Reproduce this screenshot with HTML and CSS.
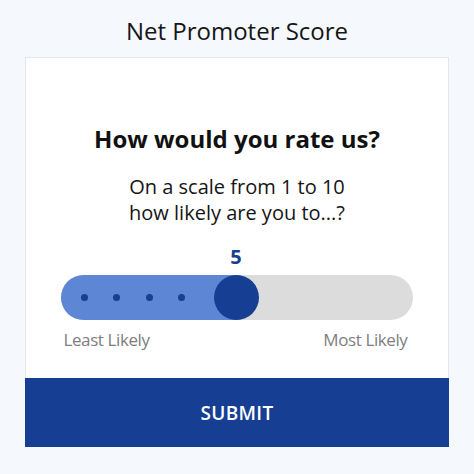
FILE: index.html
```html
<!DOCTYPE html>
<html>
<head>
<meta charset="utf-8">
<link rel="stylesheet" href="styles.css">
</head>
<body>
<div class="page">
  <h1 class="title">Net Promoter Score</h1>
  <div class="card">
    <div class="content">
      <h2 class="question">How would you rate us?</h2>
      <p class="sub">On a scale from 1 to 10<br>how likely are you to...?</p>
      <div class="value">5</div>
      <div class="track">
        <div class="fill">
          <span class="dot"></span>
          <span class="dot"></span>
          <span class="dot"></span>
          <span class="dot"></span>
          <span class="thumb"></span>
        </div>
      </div>
      <div class="labels">
        <span>Least Likely</span>
        <span>Most Likely</span>
      </div>
    </div>
    <button class="submit">SUBMIT</button>
  </div>
</div>
</body>
</html>
```

FILE: styles.css
```css
html, body {
  margin: 0;
  padding: 0;
  background: #f5f8fd;
  font-family: "Open Sans", "Noto Sans", sans-serif;
}
.page {
  width: 474px;
  height: 474px;
  display: flex;
  flex-direction: column;
  align-items: center;
}
.title {
  margin: 0 0 10px;
  padding-top: 15px;
  font-size: 24px;
  font-weight: 400;
  line-height: 32px;
  color: #161616;
}
.card {
  width: 424px;
  height: 390px;
  box-sizing: border-box;
  background: #ffffff;
  border: 1px solid #e3e6ea;
  border-bottom: none;
  display: flex;
  flex-direction: column;
}
.content {
  flex: 1;
  display: flex;
  flex-direction: column;
  align-items: center;
  padding: 64px 36px 0;
}
.question {
  margin: 0;
  font-size: 24px;
  font-weight: 700;
  line-height: 33px;
  color: #111111;
}
.sub {
  margin: 18.5px 0 0;
  font-size: 20px;
  line-height: 26px;
  text-align: center;
  color: #151515;
}
.value {
  margin-top: 17px;
  font-size: 20px;
  font-weight: 700;
  line-height: 27px;
  color: #1a3f8f;
  padding-right: 2px;
}
.track {
  margin-top: 5px;
  width: 352px;
  height: 45px;
  border-radius: 23px;
  background: #dcdcdc;
  display: flex;
}
.fill {
  width: 197px;
  height: 45px;
  border-radius: 23px;
  background: #5d87d5;
  display: flex;
  align-items: center;
  padding-left: 19.5px;
  box-sizing: border-box;
  gap: 25.5px;
}
.dot {
  width: 7px;
  height: 7px;
  border-radius: 50%;
  background: #173f92;
  flex: none;
}
.thumb {
  width: 45px;
  height: 45px;
  border-radius: 50%;
  background: #163f93;
  margin-left: 3px;
  flex: none;
}
.labels {
  margin-top: 9px;
  margin-right: 3px;
  width: 344px;
  display: flex;
  justify-content: space-between;
  font-size: 17px;
  line-height: 22px;
  letter-spacing: -0.4px;
  color: #7e7e7e;
}
.submit {
  height: 69px;
  margin: 0 -1px;
  border: none;
  background: #163f93;
  color: #ffffff;
  font-family: "Open Sans", "Noto Sans", sans-serif;
  font-size: 19px;
  font-weight: 600;
  letter-spacing: 0.3px;
  padding: 0;
}
```
